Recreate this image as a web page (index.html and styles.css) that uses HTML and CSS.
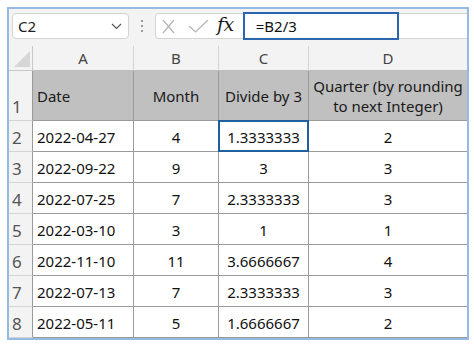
FILE: index.html
```html
<!DOCTYPE html>
<html>
<head>
<meta charset="utf-8">
<link rel="stylesheet" href="styles.css">
</head>
<body>
<div class="frame">
  <div class="toolbar">
    <div class="namebox">
      <span class="name">C2</span>
      <svg class="chev" width="11" height="7" viewBox="0 0 11 7"><polyline points="1,1 5.5,5.5 10,1" fill="none" stroke="#555" stroke-width="1.2"/></svg>
    </div>
    <div class="sep"><i></i><i></i><i></i></div>
    <div class="fxbar">
      <svg class="icon-x" width="13" height="15" viewBox="0 0 13 15"><path d="M1 1 L12 14 M12 1 L1 14" stroke="#b4b4b4" stroke-width="1.2" fill="none"/></svg>
      <svg class="icon-check" width="21" height="14" viewBox="0 0 21 14"><polyline points="1,7 7.5,13 20,1" fill="none" stroke="#b4b4b4" stroke-width="1.2"/></svg>
      <span class="fx">fx</span>
      <div class="formula">=B2/3</div>
    </div>
  </div>
  <div class="sheet">
    <div class="corner"><span class="tri"></span></div>
    <div class="colhead">A</div>
    <div class="colhead">B</div>
    <div class="colhead">C</div>
    <div class="colhead last">D</div>

    <div class="rowhead tall">1</div>
    <div class="cell hdr left">Date</div>
    <div class="cell hdr">Month</div>
    <div class="cell hdr">Divide by 3</div>
    <div class="cell hdr">Quarter (by rounding<br>to next Integer)</div>

    <div class="rowhead">2</div>
    <div class="cell left">2022-04-27</div>
    <div class="cell">4</div>
    <div class="cell active">1.3333333</div>
    <div class="cell">2</div>

    <div class="rowhead">3</div>
    <div class="cell left">2022-09-22</div>
    <div class="cell">9</div>
    <div class="cell">3</div>
    <div class="cell">3</div>

    <div class="rowhead">4</div>
    <div class="cell left">2022-07-25</div>
    <div class="cell">7</div>
    <div class="cell">2.3333333</div>
    <div class="cell">3</div>

    <div class="rowhead">5</div>
    <div class="cell left">2022-03-10</div>
    <div class="cell">3</div>
    <div class="cell">1</div>
    <div class="cell">1</div>

    <div class="rowhead">6</div>
    <div class="cell left">2022-11-10</div>
    <div class="cell">11</div>
    <div class="cell">3.6666667</div>
    <div class="cell">4</div>

    <div class="rowhead">7</div>
    <div class="cell left">2022-07-13</div>
    <div class="cell">7</div>
    <div class="cell">2.3333333</div>
    <div class="cell">3</div>

    <div class="rowhead">8</div>
    <div class="cell left">2022-05-11</div>
    <div class="cell">5</div>
    <div class="cell">1.6666667</div>
    <div class="cell">2</div>
  </div>
</div>
</body>
</html>
```

FILE: styles.css
```css
html, body {
  margin: 0;
  padding: 0;
  background: #ffffff;
}
body {
  font-family: "Noto Sans", "Open Sans", sans-serif;
  color: #111;
}
.frame {
  margin: 7px 0 0 7px;
  width: 462px;
  box-sizing: border-box;
  border: 2px solid #95bbe2;
  background: #f3f3f3;
}
.toolbar {
  height: 37px;
  box-sizing: border-box;
  padding: 4px 0 0 3px;
  display: flex;
  align-items: flex-start;
}
.namebox {
  width: 117px;
  height: 26px;
  box-sizing: border-box;
  background: #fff;
  border: 1px solid #d4d4d4;
  border-radius: 4px;
  display: flex;
  align-items: center;
  padding: 0 6px 0 5px;
}
.name {
  font-size: 15px;
  color: #222;
  flex: 1;
}
.chev {
  display: block;
}
.sep {
  width: 26px;
  height: 26px;
  display: flex;
  flex-direction: column;
  align-items: center;
  justify-content: center;
  gap: 3px;
}
.sep i {
  display: block;
  width: 2px;
  height: 2px;
  background: #9a9a9a;
}
.fxbar {
  flex: 1;
  height: 26px;
  box-sizing: border-box;
  background: #fff;
  border: 1px solid #d4d4d4;
  border-right: none;
  border-radius: 4px 0 0 4px;
  display: flex;
  align-items: center;
  padding-left: 6px;
}
.icon-x {
  display: block;
  margin-right: 13px;
}
.icon-check {
  display: block;
  margin-right: 8px;
}
.fx {
  font-family: "DejaVu Serif", "Liberation Serif", serif;
  font-style: italic;
  font-size: 19px;
  color: #1a1a1a;
  line-height: 1;
  margin-top: -3px;
  letter-spacing: -0.5px;
}
.formula {
  margin-left: 9px;
  width: 156px;
  height: 28px;
  margin-top: -1px;
  margin-bottom: -1px;
  box-sizing: border-box;
  border: 2px solid #2a66ad;
  font-size: 15px;
  line-height: 24px;
  padding-left: 11px;
  color: #111;
  background: #fff;
}
.sheet {
  display: grid;
  grid-template-columns: 24px 101px 85px 90px 158px;
  grid-template-rows: 25px 50px repeat(7, 31px);
}
.corner {
  position: relative;
  border-right: 1px solid #c8c8c8;
  border-bottom: 1px solid #c8c8c8;
  box-sizing: border-box;
}
.tri {
  position: absolute;
  right: 2px;
  bottom: 3px;
  width: 0;
  height: 0;
  border-left: 16px solid transparent;
  border-bottom: 16px solid #d6d6d6;
}
.colhead {
  box-sizing: border-box;
  border-right: 1px solid #d4d4d4;
  border-bottom: 1px solid #bdbdbd;
  font-size: 15px;
  color: #444;
  text-align: center;
  line-height: 24px;
}
.colhead.last {
  border-right: none;
}
.rowhead {
  box-sizing: border-box;
  border-right: 1px solid #9a9a9a;
  border-bottom: 1px solid #d4d4d4;
  font-size: 17px;
  color: #555;
  padding-left: 3px;
  display: flex;
  align-items: flex-end;
  line-height: 1;
  padding-bottom: 5px;
}
.cell {
  box-sizing: border-box;
  border-right: 1px solid #9a9a9a;
  border-bottom: 1px solid #9a9a9a;
  background: #fff;
  font-size: 15px;
  line-height: 20px;
  display: flex;
  align-items: center;
  justify-content: center;
  text-align: center;
  padding-top: 2px;
}
.cell.left {
  justify-content: flex-start;
  text-align: left;
  padding-left: 4px;
}
.cell.hdr {
  background: #c0c0c0;
  color: #1a1a1a;
  padding-top: 0;
}
.cell.active {
  position: relative;
}
.cell.active::after {
  content: "";
  position: absolute;
  left: -1px;
  top: -1px;
  right: -1px;
  bottom: -1px;
  border: 2px solid #1f5f9f;
}
.sheet > :nth-child(5n) {
  border-right: none;
}
```
